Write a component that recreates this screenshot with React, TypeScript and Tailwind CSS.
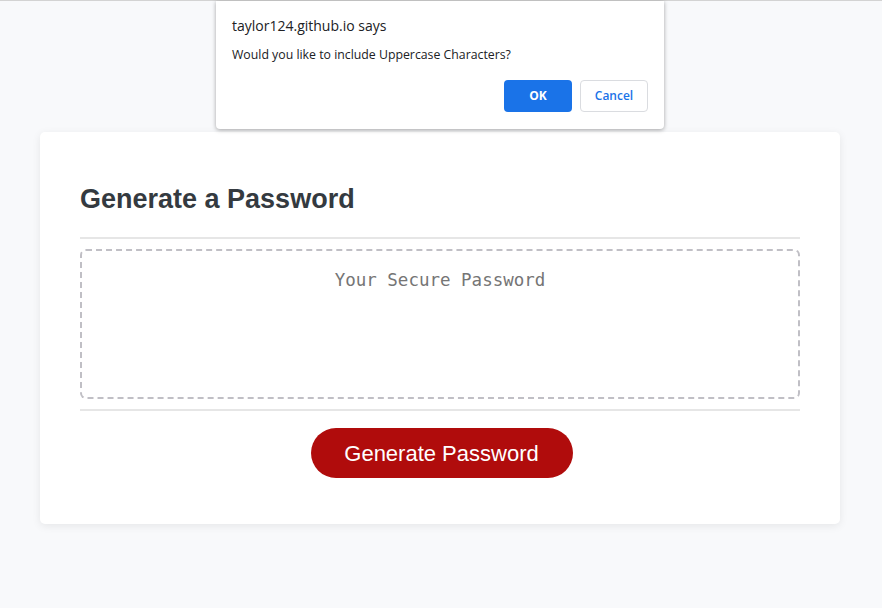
import React from 'react';

const PromptDialog: React.FC = () => {
  return (
    <div
      className="absolute left-[216px] top-0 w-[448px] h-[128px] bg-white rounded-b-[4px] shadow-[0_1px_4px_rgba(0,0,0,0.35)] px-4 pt-[15px]"
      style={{ fontFamily: '"Open Sans", "Noto Sans", sans-serif' }}
    >
      <div className="text-[14px] leading-[20px] text-[#202124]">taylor124.github.io says</div>
      <div className="mt-[10px] text-[12.3px] leading-[18px] text-[#202124]">Would you like to include Uppercase Characters?</div>
      <div className="mt-[16px] flex justify-end gap-2">
        <button className="w-[68px] h-[32px] rounded-[4px] bg-[#1a73e8] text-white text-[12px] font-bold">OK</button>
        <button className="w-[68px] h-[32px] rounded-[4px] border border-[#dadce0] bg-white text-[#1a73e8] text-[12px] font-semibold">Cancel</button>
      </div>
    </div>
  );
};

const App: React.FC = () => {
  return (
    <div className="relative min-h-[608px] bg-[#f8f9fb] border-t border-[#d3d3d3]" style={{ fontFamily: '"Liberation Sans", Arial, sans-serif' }}>
      <div className="pt-[131px] px-[40px]">
        <div className="w-[800px] bg-white rounded-[5px] shadow-[0_2px_8px_rgba(0,0,0,0.08)] px-[40px] pt-[51px] pb-[46px]">
          <h2 className="text-[27px] leading-[32px] font-bold text-[#343a40]">Generate a Password</h2>
          <div className="mt-[22px] border-t-2 border-[#e6e6e6]" />
          <div className="mt-[10px] h-[150px] border-2 border-dashed border-[#c0bfc5] rounded-[6px] pt-[16px] text-center">
            <span className="text-[17.5px] text-[#757575]" style={{ fontFamily: '"DejaVu Sans Mono", monospace' }}>
              Your Secure Password
            </span>
          </div>
          <div className="mt-[10px] border-t-2 border-[#e6e6e6]" />
          <div className="mt-[17px] flex justify-center pl-[3px]">
            <button className="w-[262px] h-[50px] rounded-full bg-[#b00c0c] text-white text-[22px]">Generate Password</button>
          </div>
        </div>
      </div>
      <PromptDialog />
    </div>
  );
};

export default App;
